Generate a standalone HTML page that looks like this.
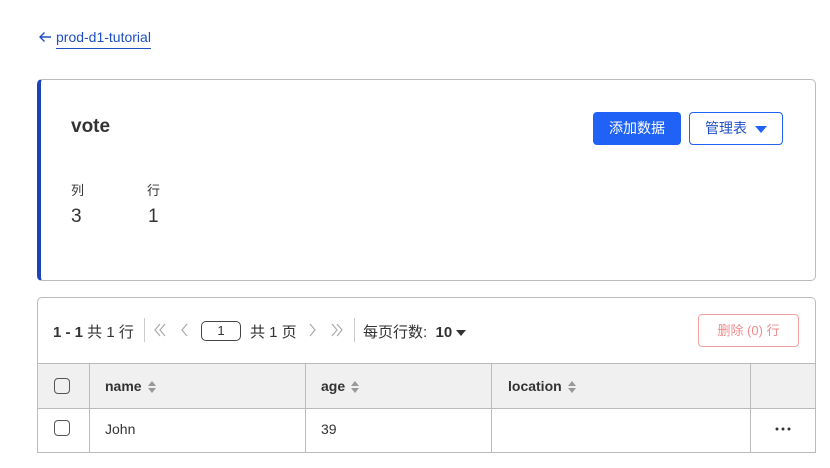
<!DOCTYPE html>
<html><head><meta charset="utf-8"><style>
*{box-sizing:border-box;margin:0;padding:0}
body{width:830px;height:468px;background:#fff;font-family:"Liberation Sans","Noto Sans CJK SC",sans-serif;color:#333;position:relative;overflow:hidden}
.a{position:absolute}
.back{left:38px;top:29px;color:#1d4fc4;font-size:14px}
.back span{border-bottom:1.5px solid #1d4fc4;padding-bottom:3px;margin-left:4px}
.card{left:37px;top:79px;width:779px;height:202px;border:1px solid #bbb;border-left:4px solid #1a44b8;border-radius:5px}
.btn1{left:593px;top:112px;width:88px;height:33px;background:#1f62f5;color:#fff;border-radius:4px;font-size:14px;text-align:center;line-height:33px}
.btn2{left:689px;top:112px;width:94px;height:33px;border:1.5px solid #1f62f5;color:#1f4fc9;border-radius:4px;font-size:14px;text-align:center;line-height:30px}
.tbl{left:37px;top:297px;width:779px;height:156px;border:1px solid #bbb;border-radius:5px 5px 0 0;overflow:hidden}
.cb{width:16px;height:16px;border:1.2px solid #555;border-radius:4px;position:absolute}
.v{position:absolute;top:66px;width:1px;height:100px;background:#bbb}
.sort{display:inline-block;vertical-align:middle;margin-left:6px;width:8px;height:12px;position:relative}
.sort:before{content:"";position:absolute;left:0;top:0;border:4px solid transparent;border-bottom:5px solid #999;border-top:0}
.sort:after{content:"";position:absolute;left:0;top:7px;border:4px solid transparent;border-top:5px solid #999;border-bottom:0}
</style></head><body>
<div class="a back"><svg width="14" height="12" viewBox="0 0 14 12" style="vertical-align:-1px"><path d="M13 6H2M6.5 1.5L2 6l4.5 4.5" fill="none" stroke="#1d4fc4" stroke-width="1.4"/></svg><span>prod-d1-tutorial</span></div>
<div class="a card">
 <div class="a" style="left:30px;top:36px;font-size:19px;font-weight:bold;color:#333">vote</div>
 <div class="a" style="left:30px;top:100px;font-size:13px">列</div>
 <div class="a" style="left:106px;top:100px;font-size:13px">行</div>
 <div class="a" style="left:30px;top:126px;font-size:19px">3</div>
 <div class="a" style="left:107px;top:126px;font-size:19px">1</div>
</div>
<div class="a btn1">添加数据</div>
<div class="a btn2">管理表 <span style="display:inline-block;border:6px solid transparent;border-top:7px solid #1f62f5;border-bottom:0;vertical-align:middle;margin-left:4px"></span></div>
<div class="a tbl">
 <div class="a" style="left:15px;top:23px;font-size:15px;white-space:nowrap"><b>1 - 1</b> 共 1 行</div>
 <div class="a" style="left:106px;top:20px;width:1px;height:24px;background:#ccc"></div>
 <svg class="a" style="left:116px;top:25px" width="40" height="14" viewBox="0 0 40 14"><path d="M6 1L1 7l5 6M11 1L6 7l5 6M33 1l-5 6 5 6" fill="none" stroke="#aaa" stroke-width="1.2"/></svg>
 <div class="a" style="left:163px;top:23px;width:40px;height:20px;border:1.2px solid #444;border-radius:5px;font-size:13px;text-align:center;line-height:18px">1</div>
 <div class="a" style="left:212px;top:23px;font-size:15px">共 1 页</div>
 <svg class="a" style="left:270px;top:25px" width="40" height="14" viewBox="0 0 40 14"><path d="M2 1l5 6-5 6M24 1l5 6-5 6M29 1l5 6-5 6" fill="none" stroke="#aaa" stroke-width="1.2"/></svg>
 <div class="a" style="left:316px;top:20px;width:1px;height:24px;background:#ccc"></div>
 <div class="a" style="left:325px;top:23px;font-size:15px;white-space:nowrap">每页行数: &nbsp;<b>10</b> <span style="display:inline-block;border:5px solid transparent;border-top:6px solid #333;border-bottom:0;vertical-align:middle"></span></div>
 <div class="a" style="left:660px;top:16px;width:101px;height:33px;border:1px solid #f3a1a1;border-radius:4px;color:#f08a8a;font-size:13px;text-align:center;line-height:31px">删除 (0) 行</div>
 <div class="a" style="left:0;top:65px;width:779px;height:46px;background:#f0f0f0;border-top:1px solid #bbb;border-bottom:1px solid #bbb"></div>
 <div class="v" style="left:51px"></div><div class="v" style="left:267px"></div><div class="v" style="left:453px"></div><div class="v" style="left:712px"></div>
 <div class="cb" style="left:16px;top:80px"></div>
 <div class="cb" style="left:16px;top:122px"></div>
 <div class="a" style="left:67px;top:80px;font-size:14px;font-weight:bold">name<span class="sort"></span></div>
 <div class="a" style="left:283px;top:80px;font-size:14px;font-weight:bold">age<span class="sort"></span></div>
 <div class="a" style="left:470px;top:80px;font-size:14px;font-weight:bold">location<span class="sort"></span></div>
 <div class="a" style="left:67px;top:123px;font-size:14px">John</div>
 <div class="a" style="left:283px;top:123px;font-size:14px">39</div>
 <svg class="a" style="left:737px;top:129px" width="16" height="4"><circle cx="2" cy="2" r="1.5" fill="#333"/><circle cx="8" cy="2" r="1.5" fill="#333"/><circle cx="14" cy="2" r="1.5" fill="#333"/></svg>
</div>
</body></html>
